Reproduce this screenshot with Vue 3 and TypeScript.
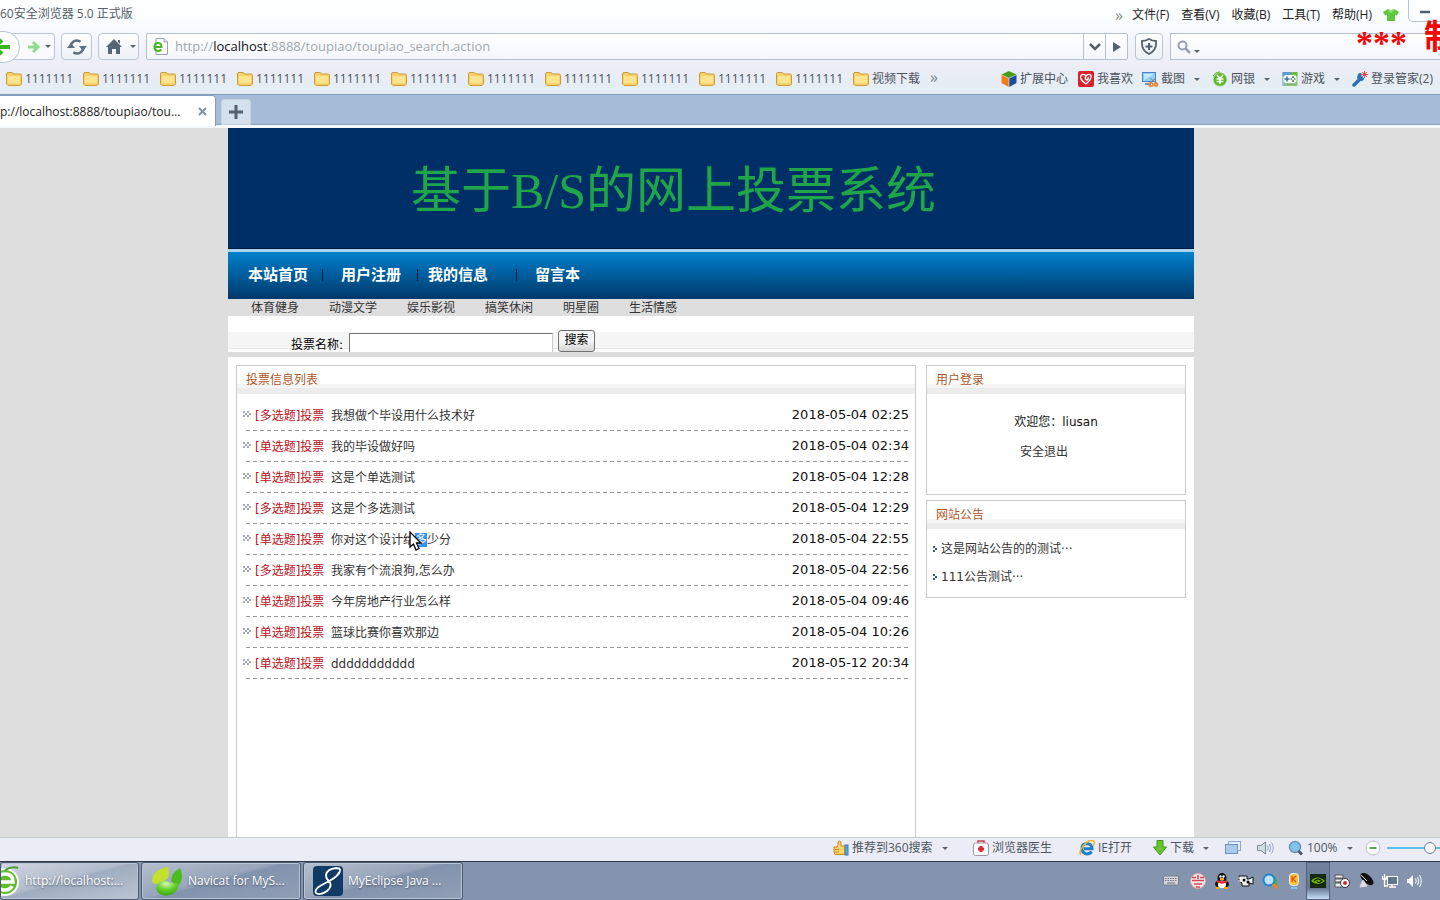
<script setup lang="ts">
import { ref } from 'vue'

interface Poll {
  kind: string
  parts: [string, string, string]
  time: string
}

const menus: string[] = ['文件(F)', '查看(V)', '收藏(B)', '工具(T)', '帮助(H)']
const bookmarks: string[] = [...Array<string>(11).fill('1111111'), '视频下载']
const siteNav: string[] = ['本站首页', '用户注册', '我的信息', '留言本']
const categories: string[] = ['体育健身', '动漫文学', '娱乐影视', '搞笑休闲', '明星圈', '生活情感']
const notices: string[] = ['这是网站公告的的测试···', '111公告测试···']
const polls: Poll[] = [
  { kind: '多选题', parts: ['我想做个毕设用什么技术好', '', ''], time: '2018-05-04 02:25' },
  { kind: '单选题', parts: ['我的毕设做好吗', '', ''], time: '2018-05-04 02:34' },
  { kind: '单选题', parts: ['这是个单选测试', '', ''], time: '2018-05-04 12:28' },
  { kind: '多选题', parts: ['这是个多选测试', '', ''], time: '2018-05-04 12:29' },
  { kind: '单选题', parts: ['你对这个设计给', '多', '少分'], time: '2018-05-04 22:55' },
  { kind: '多选题', parts: ['我家有个流浪狗,怎么办', '', ''], time: '2018-05-04 22:56' },
  { kind: '单选题', parts: ['今年房地产行业怎么样', '', ''], time: '2018-05-04 09:46' },
  { kind: '单选题', parts: ['篮球比赛你喜欢那边', '', ''], time: '2018-05-04 10:26' },
  { kind: '单选题', parts: ['ddddddddddd', '', ''], time: '2018-05-12 20:34' },
]
const keyword = ref('')
const webSearch = ref('')
const zoom = ref(50)
</script>

<template>
  <div class="desktop">
    <header class="chrome">
      <div class="titlebar">
        <span class="app-title">60安全浏览器 5.0 正式版</span>
        <nav class="menus">
          <span class="chev">»</span>
          <button v-for="m in menus" :key="m" type="button">{{ m }}</button>
          <svg class="shirt" width="16" height="14" viewBox="0 0 16 14"><path d="M5 1Q8 3 11 1L16 4L14 7.500L12 6.500V13H4V6.500L2 7.500L0 4Z" fill="#5cc83c" /><path d="M5 1Q8 3 11 1L10 4Q8 5 6 4Z" fill="#8ee070" /></svg>
          <button class="minimize" type="button" aria-label="最小化"><svg width="12" height="6" viewBox="0 0 12 6"><path d="M1 4H11" stroke="#53606c" stroke-width="2.500" /></svg></button>
        </nav>
      </div>
      <div class="marquee"><span class="stars">***</span><span>制</span></div>

      <div class="toolbar">
        <div class="history">
          <button class="back" type="button" aria-label="后退"><svg width="20" height="18" viewBox="0 0 20 18"><path d="M19 9H5M11 2L4 9L11 16" fill="none" stroke="#3db51f" stroke-width="4" /></svg></button>
          <button class="forward" type="button" aria-label="前进">
            <svg width="14" height="14" viewBox="0 0 14 14"><path d="M1 7H10M6 2L11 7L6 12" fill="none" stroke="#8fdc8b" stroke-width="3" /></svg>
            <i class="caret"></i>
          </button>
        </div>
        <button class="tool refresh" type="button" aria-label="刷新"><svg width="20" height="18" viewBox="0 0 20 18"><path d="M4 10A6 6 0 0 1 13.500 3.800M16 8A6 6 0 0 1 6.500 14.200" fill="none" stroke="#5f6f80" stroke-width="2.500" /><path d="M0 10H8L4 5ZM12 8H20L16 13Z" fill="#5f6f80" /></svg></button>
        <button class="tool home" type="button" aria-label="主页"><svg width="16" height="15" viewBox="0 0 16 15"><path d="M8 0L16 8H14V15H10V10H6V15H2V8H0Z" fill="#566676" /><path d="M12 1H14V5L12 3Z" fill="#566676" /></svg><i class="caret"></i></button>
        <div class="address">
          <svg width="16" height="17" viewBox="0 0 16 17"><path d="M3 .5H11L14.500 4V16.500H3Z" fill="#fff" stroke="#94a4b5" /><path d="M11 .5V4H14.500" fill="none" stroke="#94a4b5" /><path d="M1.500 9H8.500Q8.500 5 5 5T1.500 9Q1.500 13 5 13Q7 13 8.300 11.500" fill="none" stroke="#49b524" stroke-width="2" /></svg>
          <div class="url">http://<b>localhost</b>:8888/toupiao/toupiao_search.action</div>
          <button type="button" aria-label="历史"><svg width="12" height="8" viewBox="0 0 12 8"><path d="M1 1L6 6L11 1" fill="none" stroke="#566069" stroke-width="2.500" /></svg></button>
          <button type="button" aria-label="转到"><svg width="10" height="10" viewBox="0 0 10 10"><path d="M1 0L9 5L1 10Z" fill="#566273" /></svg></button>
        </div>
        <button class="tool shield" type="button" aria-label="安全"><svg width="18" height="18" viewBox="0 0 18 18"><path d="M9 1Q12 3 16 3Q17 12 9 16Q1 12 2 3Q6 3 9 1Z" fill="none" stroke="#56626e" stroke-width="1.800" /><path d="M9 5V12M5.500 8.500H12.500" stroke="#56626e" stroke-width="2" /></svg></button>
        <label class="websearch">
          <svg width="14" height="14" viewBox="0 0 14 14"><circle cx="5.500" cy="5.500" r="4" fill="none" stroke="#96a0ae" stroke-width="2" /><path d="M8.500 8.500L13 13" stroke="#96a0ae" stroke-width="2.500" /></svg>
          <i class="caret"></i>
          <input v-model="webSearch" type="text" aria-label="网页搜索" />
        </label>
      </div>

      <div class="bookmarks">
        <ul class="folders">
          <li v-for="(b, i) in bookmarks" :key="i">
            <a href="#"><svg width="16" height="14" viewBox="0 0 16 14"><path d="M.5 2Q.5 .5 2 .5H6L8 2H14Q15.500 2 15.500 3.500V12L14 13.500H2L.5 12Z" fill="#f7d26b" stroke="#cf9a3c" /><path d="M2 4H14V11H2Z" fill="#fde48f" /></svg>{{ b }}</a>
          </li>
          <li class="more">»</li>
        </ul>
        <div class="plugins">
          <button type="button"><svg width="16" height="16" viewBox="0 0 16 16"><path d="M8 0L15.500 3.500L8 7L.5 3.500Z" fill="#4b9e1c" /><path d="M.5 4L7.700 7.500V16L.5 12Z" fill="#ef7d1a" /><path d="M15.500 4L8.300 7.500V16L15.500 12Z" fill="#1e4c9a" /></svg>扩展中心</button>
          <button type="button"><svg width="16" height="16" viewBox="0 0 16 16"><rect width="16" height="16" rx="2" fill="#d8222c" /><path d="M8 13Q1 8 3 4.500Q5.500 2 8 5Q10.500 2 13 4.500Q14 8 8 13M8 5Q6 8 9 9Q11 8 10 6" fill="none" stroke="#fff" stroke-width="1.400" /></svg>我喜欢</button>
          <button type="button"><svg width="16" height="16" viewBox="0 0 16 16"><rect x=".5" y="1.500" width="13" height="9" fill="#8fd0fa" stroke="#4a86c4" /><path d="M2 3H12L2 9Z" fill="#c5eafe" /><path d="M3 13H9" stroke="#7a96b2" stroke-width="2" /><path d="M8 7L14 12M14 7L8 12" stroke="#748596" /><circle cx="9" cy="13.500" r="1.800" fill="none" stroke="#ee7b20" stroke-width="1.400" /><circle cx="14" cy="13.500" r="1.500" fill="none" stroke="#ee7b20" stroke-width="1.400" /></svg>截图<i class="caret"></i></button>
          <button type="button"><svg width="16" height="16" viewBox="0 0 16 16"><circle cx="8" cy="8.500" r="6.800" fill="#58b628" stroke="#b9dfa2" /><path d="M1 5Q3 1 8 .8" fill="none" stroke="#58b628" /><path d="M5 4L8 7.500L11 4M4.500 8H11.500M4.500 10.500H11.500M8 7V13" fill="none" stroke="#fff" stroke-width="1.500" /></svg>网银<i class="caret"></i></button>
          <button type="button"><svg width="16" height="16" viewBox="0 0 16 16"><rect x=".5" y="1" width="15" height="14" rx="1" fill="#8cc07a" /><path d="M.5 1H9V5H.5Z" fill="#5b9bd6" /><path d="M.5 5H3V15H.5Z" fill="#8ab9e0" /><path d="M9 1H15.500V5H9Z" fill="#72b944" /><rect x="1.500" y="4" width="13" height="8" rx="3" fill="#fff" /><path d="M2.500 8H7.500M5 5.500V10.500" stroke="#2f6fae" stroke-width="1.500" /><path d="M11 5V7M11 9V11M8.500 8H10.200M11.800 8H13.500" stroke="#3f7f5a" stroke-width="1.600" /></svg>游戏<i class="caret"></i></button>
          <button type="button"><svg width="16" height="16" viewBox="0 0 16 16"><path d="M2 14L9 7" stroke="#2c70b8" stroke-width="3.500" stroke-linecap="round" /><path d="M6 3Q8 1 10 3L9 6L12 7Q12 10 9 10Q6 9 5 7Z" fill="#2c70b8" /><path d="M12.500 0V7M9 3.500H16M10 1L15 6M15 1L10 6" stroke="#e24c43" /></svg>登录管家(2)</button>
        </div>
      </div>

      <div class="tabs">
        <div class="tab"><span>p://localhost:8888/toupiao/tou...</span><button type="button" aria-label="关闭"><svg width="9" height="9" viewBox="0 0 9 9"><path d="M1 1L8 8M8 1L1 8" stroke="#7e93a5" stroke-width="2" /></svg></button></div>
        <button class="newtab" type="button" aria-label="新标签"><svg width="14" height="14" viewBox="0 0 14 14"><path d="M7 0V14M0 7H14" stroke="#53616f" stroke-width="3" /></svg></button>
      </div>
    </header>

    <main class="viewport">
      <div class="site">
        <h1 class="banner">基于B/S的网上投票系统</h1>
        <ul class="sitenav">
          <li v-for="n in siteNav" :key="n"><a href="#">{{ n }}</a></li>
        </ul>
        <nav class="categories"><a v-for="c in categories" :key="c" href="#">{{ c }}</a></nav>
        <form class="search" @submit.prevent>
          <label for="keyword">投票名称:</label>
          <input id="keyword" v-model="keyword" type="text" />
          <button type="submit">搜索</button>
        </form>
        <div class="content">
          <section class="panel list">
            <h2>投票信息列表</h2>
            <ul>
              <li v-for="p in polls" :key="p.time">
                <svg width="8" height="6" viewBox="0 0 8 6"><path d="M0 0H2V2H0ZM2 2H4V4H2ZM0 4H2V6H0ZM4 0H6V2H4ZM6 2H8V4H6ZM4 4H6V6H4Z" fill="#a6a6b8" /></svg>
                <a class="kind" href="#">[{{ p.kind }}]投票</a>
                <a class="subject" href="#">{{ p.parts[0] }}<span v-if="p.parts[1]" class="selected">{{ p.parts[1] }}<svg class="pointer" width="14" height="20" viewBox="0 0 14 20"><path d="M1 1V16L4.500 13L7 19L10 17.500L7.500 12H12Z" fill="#fff" stroke="#000" stroke-width="1.300" /></svg></span>{{ p.parts[2] }}</a>
                <time>{{ p.time }}</time>
              </li>
            </ul>
          </section>
          <aside>
            <section class="panel login">
              <h2>用户登录</h2>
              <p>欢迎您：liusan</p>
              <p><a href="#">安全退出</a></p>
            </section>
            <section class="panel notices">
              <h2>网站公告</h2>
              <ul>
                <li v-for="n in notices" :key="n"><svg width="5" height="6" viewBox="0 0 5 6"><path d="M0 0H2V2H4V4H2V6H0V4H2V2H0Z" fill="#3c5a8c" /></svg><a href="#">{{ n }}</a></li>
              </ul>
            </section>
          </aside>
        </div>
      </div>
    </main>

    <div class="statusbar">
      <button type="button"><svg width="16" height="16" viewBox="0 0 16 16"><path d="M1 7H4L5 5V2Q6.500 0 8 2V6H12V14.500H2Q1 14.500 1 7Z" fill="#fbd468" stroke="#c98427" /><path d="M2 9.500H6M2 12H6" stroke="#c98427" /><rect x="12" y="5" width="3" height="10" fill="#5aa8dc" stroke="#3b7bb4" /></svg>推荐到360搜索<i class="caret"></i></button>
      <button type="button"><svg width="16" height="16" viewBox="0 0 16 16"><path d="M5 3V1H11V3" fill="none" stroke="#c94048" stroke-width="1.500" /><rect x=".5" y="3" width="15" height="12.500" rx="2" fill="#fff" stroke="#98979e" /><path d="M8 6V12M5 9H11" stroke="#d82830" stroke-width="3" /></svg>浏览器医生</button>
      <button type="button"><svg width="16" height="16" viewBox="0 0 16 16"><path d="M12.500 11.500Q11 14 8 14Q3 13.500 3 8.500T8 3.500Q13 4 13 8.700H5" fill="none" stroke="#1f7fc8" stroke-width="3" /><path d="M2 15Q-1 12 5 5T15 1.500Q16 3 14 6" fill="none" stroke="#f0b52e" stroke-width="1.600" /></svg>IE打开</button>
      <button type="button"><svg width="14" height="16" viewBox="0 0 14 16"><path d="M4 .5H10V7H13.500L7 15L.5 7H4Z" fill="#66c42d" stroke="#3f9a1c" /></svg>下载<i class="caret"></i></button>
      <button type="button" aria-label="窗口"><svg width="16" height="14" viewBox="0 0 16 14"><rect x="3.500" y=".5" width="12" height="9" fill="#e2edfa" stroke="#8ba8ce" /><rect x=".5" y="3.500" width="12" height="9" fill="#a9c9f0" stroke="#6f92c0" /></svg></button>
      <button type="button" aria-label="静音"><svg width="17" height="14" viewBox="0 0 17 14"><path d="M.5 4.500H4L8.500 1V13L4 9.500H.5Z" fill="#d5dbe3" stroke="#7d8995" /><path d="M10.500 4.500Q12 7 10.500 9.500M12.500 3Q15 7 12.500 11M14.500 1.500Q18 7 14.500 12.500" fill="none" stroke="#91a9c4" /></svg></button>
      <button type="button"><svg width="16" height="16" viewBox="0 0 16 16"><circle cx="7" cy="7" r="5.500" fill="#80c4ef" stroke="#7393b4" stroke-width="1.500" /><path d="M10.500 11L14 14.500" stroke="#4c5865" stroke-width="3" /></svg>100%<i class="caret"></i></button>
      <button type="button" aria-label="缩小"><svg width="16" height="16" viewBox="0 0 16 16"><circle cx="8" cy="8" r="7" fill="#fff" stroke="#b4c1cd" /><path d="M4.500 8H11.500" stroke="#55a855" stroke-width="2" /></svg></button>
      <span class="slider"><input v-model="zoom" type="range" min="0" max="100" aria-label="缩放" /></span>
    </div>

    <footer class="taskbar">
      <button class="task active" type="button"><svg width="30" height="30" viewBox="0 0 30 30"><circle cx="15" cy="16" r="13" fill="#62bd2c" stroke="#fff" stroke-width="2" /><path d="M7 16H23Q23 8 15 8T7 16Q7 24 15 24Q20 24 22 20" fill="none" stroke="#fff" stroke-width="3.500" /><path d="M15 4Q22 0 28 2" fill="none" stroke="#4d9c35" stroke-width="2" /></svg>http://localhost:...</button>
      <button class="task" type="button">
        <svg width="32" height="30" viewBox="0 0 32 30">
          <defs>
            <radialGradient id="leaf" cx=".45" cy=".2" r=".8"><stop offset="0" stop-color="#d6f8b4" /><stop offset=".5" stop-color="#66d128" /><stop offset="1" stop-color="#35a80e" /></radialGradient>
          </defs>
          <path d="M1 15Q2 3 17 1Q19 6 17 12Q10 18 3 18Z" fill="#c2e02c" />
          <path d="M20 15Q20 7 29 2Q34 12 27 20Z" fill="#48bd1c" />
          <path d="M5 23Q6 14 15 15Q20 18 28 17Q27 29 15 29.500Q7 29 5 23Z" fill="url(#leaf)" />
        </svg>Navicat for MyS...</button>
      <button class="task" type="button"><svg width="30" height="30" viewBox="0 0 30 30"><rect width="30" height="30" rx="4" fill="#123a66" /><path d="M25 9Q30 2 23 2Q14 3 13 9Q13 13 16 15Q20 20 14 25Q7 30 3 27Q1 24 7 20L18 14Q25 10 26 6" fill="none" stroke="#fff" stroke-width="1.800" /></svg>MyEclipse Java ...</button>
      <div class="tray">
        <svg viewBox="0 0 16 16"><rect x=".5" y="3" width="15" height="9" rx="1" fill="#d5d9dd" stroke="#737c88" /><path d="M2 5.500H14M2 7.500H14" stroke="#68717b" stroke-dasharray="1.500 1" /><path d="M4 10H12" stroke="#68717b" /></svg>
        <svg viewBox="0 0 16 16"><circle cx="8" cy="8" r="7.500" fill="#f6e9e9" stroke="#e3a0a2" /><path d="M2 4.500H6M8 2V6M10 4.500H14M2 7.500H14M4 11H12M6 14H10" stroke="#d34b50" stroke-width="1.600" /></svg>
        <svg viewBox="0 0 16 16"><ellipse cx="8" cy="5" rx="4.500" ry="5" fill="#111" /><ellipse cx="8" cy="11" rx="7" ry="4.500" fill="#111" /><ellipse cx="8" cy="11.500" rx="4" ry="4" fill="#fff" /><path d="M3 8Q8 11 13 8" stroke="#e62c2c" stroke-width="2.500" fill="none" /><circle cx="6.500" cy="3.500" r="1.200" fill="#fff" /><circle cx="9.500" cy="3.500" r="1.200" fill="#fff" /><path d="M6 6H10M2 15H6M10 15H14" stroke="#f4a91d" stroke-width="2" /></svg>
        <svg viewBox="0 0 16 16"><path d="M1 3H9V6H11L15 4V11L11 10V13H4V10L1 8Z" fill="#eee" stroke="#111" /><path d="M0 5H3M0 8H4" stroke="#fff" /><circle cx="6" cy="7" r="1.500" /><circle cx="10" cy="9" r="1.500" /></svg>
        <svg viewBox="0 0 16 16"><path d="M9 1Q16 3 15 13L10 11Z" fill="#48ae45" /><circle cx="7" cy="7" r="5.500" fill="#bce5ff" stroke="#2284d3" stroke-width="2" /><path d="M11 11L15 15" stroke="#ef8821" stroke-width="3" /></svg>
        <svg viewBox="0 0 16 16"><rect x="3.500" y=".5" width="9" height="12" rx="3" fill="#f8c431" stroke="#e7eefa" /><path d="M6 3V9M10 3L7 6L10 9" fill="none" stroke="#d85b19" stroke-width="1.500" /><path d="M5 15H11" stroke="#7fc5f4" stroke-width="2" /></svg>
        <span class="lit"><svg viewBox="0 0 16 16"><rect y="1" width="16" height="14" fill="#17290d" /><path d="M1 8Q7 1 15 8Q8 14 1 8Z" fill="#76b900" /><path d="M4 8Q8 4 12 8Q8 11 7 8" fill="none" stroke="#17290d" stroke-width="1.200" /></svg></span>
        <svg viewBox="0 0 16 16"><path d="M1 2H9V5H1ZM1 6H9V9H1ZM1 10H9V14H1Z" fill="#eee" stroke="#555" /><circle cx="11" cy="10" r="4.500" fill="#fff" stroke="#333" /><circle cx="11" cy="10" r="2" fill="#d42929" /></svg>
        <svg viewBox="0 0 16 16"><ellipse cx="9" cy="6" rx="8" ry="4" transform="rotate(42 9 6)" fill="#111" /><path d="M2 14L5 7L9 13ZM3 2L9 8" fill="#ddd" stroke="#ddd" /></svg>
        <svg viewBox="0 0 16 16"><rect x="5.500" y="3.500" width="10" height="8" fill="#61758c" stroke="#fff" /><path d="M2.500 1V6M.5 3V6H4.500V3M2.500 6V13H6M7 14H14M10 11V14" fill="none" stroke="#fff" stroke-width="1.300" /></svg>
        <svg viewBox="0 0 16 16"><path d="M1 6H3L7 2V14L3 10H1Z" fill="#fff" /><path d="M9.500 5.500Q11 8 9.500 10.500M11.500 4Q14 8 11.500 12M13.500 2Q17 8 13.500 14" fill="none" stroke="#fff" /></svg>
      </div>
    </footer>
  </div>
</template>

<style>
body { margin: 0; }
</style>

<style scoped>
* { box-sizing: border-box; }
.desktop { height: 100vh; display: flex; flex-direction: column; overflow: hidden; background: #dedede; color: #333; font: 12px/16px "Open Sans", "Noto Sans CJK SC", sans-serif; }
button { border: 0; padding: 0; background: none; font: inherit; color: inherit; display: flex; align-items: center; white-space: nowrap; }
a { color: inherit; text-decoration: none; }
ul { list-style: none; margin: 0; padding: 0; }
svg { flex: none; display: block; }
input { font: inherit; }
.caret { flex: none; width: 0; height: 0; border: 3px solid transparent; border-top-color: #59636d; border-bottom: 0; }

.chrome { position: relative; flex: none; overflow: hidden; background: linear-gradient(#fff 0, #fafdff 20px, #f2f3fb 45px, #ecedf5 66px, #e4edf5 92px); }
.titlebar { height: 30px; display: flex; justify-content: space-between; }
.app-title { line-height: 28px; color: #555d66; white-space: nowrap; }
.menus { display: flex; align-items: center; gap: 12px; color: #222; }
.chev { color: #888; font-size: 16px; margin-right: -3px; }
.shirt { margin-left: -1px; }
.minimize { align-self: flex-start; width: 32px; height: 22px; margin-left: -3px; border: 1px solid #b9c3d0; border-width: 0 0 1px 1px; border-radius: 0 0 0 5px; justify-content: center; }
.marquee { position: absolute; z-index: 2; left: calc(100% - 84px); top: 20px; display: flex; gap: 17px; white-space: nowrap; color: #f00808; font: bold 34px/36px "Liberation Serif", "Noto Sans CJK SC", serif; }
.stars { padding-top: 5px; }

.toolbar { height: 32px; display: flex; align-items: center; padding-top: 1px; }
.history { display: flex; align-items: center; width: 55px; height: 27px; margin-right: 6px; border: 1px solid #b9c6d4; border-left: 0; border-radius: 0 4px 4px 0; background: #f8fafd; }
.back { width: 40px; height: 32px; margin-left: -20px; border: 1px solid #b9c6d4; border-radius: 0 16px 16px 0; background: #fff; justify-content: flex-end; padding-right: 8px; }
.forward { gap: 4px; margin-left: 7px; }
.tool { height: 27px; border: 1px solid #b9c6d4; border-radius: 4px; background: linear-gradient(#fdfeff, #edf1f6); justify-content: center; flex: none; }
.refresh { width: 31px; margin-right: 6px; }
.home { width: 41px; gap: 8px; margin-right: 7px; padding-left: 4px; }
.address { flex: 1; min-width: 0; height: 27px; display: flex; align-items: center; border: 1px solid #b4c1ce; border-radius: 2px; background: linear-gradient(#fff, #f4f6fd); padding-left: 6px; margin-right: 7px; }
.url { flex: 1; min-width: 0; overflow: hidden; margin-left: 6px; padding-bottom: 2px; font-size: 13px; line-height: 20px; color: #a3a7ac; }
.url b { color: #111; font-weight: 400; }
.address button { width: 22px; height: 100%; border-left: 1px solid #b4c1ce; justify-content: center; }
.shield { width: 28px; margin-right: 7px; }
.websearch { width: 270px; height: 27px; display: flex; align-items: center; border: 1px solid #b4c1ce; border-right: 0; background: linear-gradient(#fff, #f4f6fd); padding-left: 6px; gap: 3px; }
.websearch .caret { margin-top: 10px; }
.websearch input { flex: 1; min-width: 0; border: 0; background: none; outline: 0; }

.bookmarks { height: 32px; padding-top: 2px; display: flex; justify-content: space-between; align-items: center; color: #4b535c; }
.folders { display: flex; padding-left: 6px; }
.folders li { width: 77px; }
.folders a { display: flex; align-items: center; gap: 3px; white-space: nowrap; }
.folders .more { width: 12px; font-size: 16px; line-height: 12px; color: #7b838c; }
.plugins { display: grid; grid-template-columns: 77px 64px 70px 70px 70px 88px; }
.plugins button { gap: 3px; }
.plugins .caret, .statusbar .caret { margin-left: 6px; }

.tabs { height: 34px; display: flex; align-items: flex-end; padding-bottom: 3px; border-top: 1px solid #7f9cba; background: linear-gradient(#a5bbd7 0, #a5bbd7 29px, #87a1be 29px, #87a1be 30px, #f4f8fb 30px); }
.tab { width: 216px; height: 31px; margin-bottom: -1px; display: flex; align-items: center; justify-content: space-between; padding-right: 8px; border: 1px solid #86a0bc; border-width: 1px 1px 0 0; border-radius: 0 4px 0 0; background: #fff; color: #222; white-space: nowrap; }
.tab span { padding-top: 2px; }
.newtab { width: 30px; height: 26px; margin-left: 5px; justify-content: center; border: 1px solid #c4d2e2; border-radius: 3px 3px 0 0; background: #d5e0ed; }

.viewport { flex: 1; min-height: 0; overflow: hidden; padding-right: 18px; display: flex; justify-content: center; font-family: "DejaVu Sans", "Noto Sans CJK SC", sans-serif; }
.site { width: 966px; display: flex; flex-direction: column; }
.banner { flex: none; height: 121px; margin: 0; padding-left: 183px; background: #002e67; border-bottom: 1px solid #001a3e; color: #1ea648; font: 400 50px/126px "Liberation Serif", "Noto Sans CJK SC", serif; }
.sitenav { flex: none; height: 50px; display: grid; grid-template-columns: 95px 95px 99px auto; padding-bottom: 2px; border-top: 3px solid #a8d4f2; background: linear-gradient(#0080cc, #00386a); color: #fff; font-weight: 700; font-size: 15px; }
.sitenav li { display: flex; align-items: center; padding-left: 18px; }
.sitenav li:first-child { padding-left: 20px; }
.sitenav li:nth-child(3) { padding-left: 10px; }
.sitenav li:not(:last-child)::after { content: ""; width: 1px; height: 12px; margin-left: auto; background: #001c3d; }
.categories { flex: none; height: 17px; display: flex; gap: 30px; padding-left: 23px; line-height: 18px; }
.search { flex: none; height: 36px; display: flex; align-items: flex-start; overflow: hidden; padding: 14px 0 0 63px; background: linear-gradient(#fff 16px, #f5f5f5 16px, #f5f5f5 32px, #e8e8e8 32px, #e8e8e8 33px, #fff 33px); color: #000; }
.search label { margin-top: 7px; width: 58px; white-space: nowrap; }
.search input { width: 204px; height: 24px; margin-top: 3px; border: 1px solid #777; border-right-color: #ccc; background: #fff; }
.search button { width: 37px; height: 22px; margin-left: 5px; justify-content: center; border: 1px solid #707070; border-radius: 3px; background: linear-gradient(#f5f5f5 50%, #d5d5d5); padding-bottom: 3px; }
.content { flex: 1; min-height: 0; display: flex; align-items: flex-start; gap: 10px; border-top: 5px solid #dcdcdc; background: #fff; padding: 8px 8px 0; }
.panel { border: 1px solid #ccc; background: #fff; }
.panel h2 { margin: 0; height: 28px; padding-left: 9px; color: #b0562a; font-size: 12px; line-height: 28px; font-weight: 400; text-align: left; background: linear-gradient(#fff 18px, #f5f5f5 18px, #f5f5f5 22px, #ececec 22px); }
.list { flex: 1; align-self: stretch; border-bottom: 0; }
.list ul { padding: 6px 6px 0 6px; }
.list li { height: 31px; display: flex; align-items: center; position: relative; }
.list li > svg { margin-bottom: 3px; }
.list li::after { content: ""; position: absolute; left: 3px; right: 0; bottom: 0; height: 1px; background: repeating-linear-gradient(90deg, #999 0 4px, transparent 4px 7px); }
.kind { width: 76px; margin-left: 4px; color: #b8141c; }
.selected { position: relative; background: #3295f5; color: #fff; }
.pointer { position: absolute; left: -6px; top: -2px; }
.list time { margin-left: auto; padding-bottom: 2px; font-size: 13px; color: #111; }
aside { width: 260px; }
.login { height: 130px; margin-bottom: 5px; text-align: center; color: #111; }
.login p { margin: 20px 0 0; font-size: 12px; }
.login p + p { margin: 14px 24px 0 0; color: #333; }
.notices { height: 98px; }
.notices ul { padding: 6px; }
.notices li { display: flex; align-items: center; height: 28px; gap: 3px; }

.statusbar { flex: none; height: 24px; display: grid; grid-template-columns: 140px 106px 74px 72px 32px 31px 77px 22px 53px; justify-content: end; align-items: center; padding-bottom: 3px; border-top: 1px solid #c8ccd2; background: #ebecf5; color: #4d5662; }
.statusbar button { gap: 3px; }
.slider { overflow: hidden; display: block; }
.slider input { display: block; width: 86px; height: 16px; margin: 0; appearance: none; background: linear-gradient(transparent 7px, #5bc0ea 7px, #5bc0ea 9px, transparent 9px); }
.slider input::-webkit-slider-thumb { appearance: none; width: 12px; height: 12px; border: 1px solid #75808c; border-radius: 50%; background: #f5f9fc; }

.taskbar { flex: none; height: 39px; display: flex; gap: 2px; border-top: 1px solid #2c3a50; background: #8494ae; color: #fff; }
.task { width: 160px; gap: 5px; padding-left: 9px; border: 1px solid #4c5a72; border-radius: 3px; box-shadow: inset 0 0 0 1px #b9c3d2; background: linear-gradient(165deg, #b4becd 0, #98a5bb 45%, #8493ad 50%, #909eb6); text-shadow: 0 1px 2px #44526a; overflow: hidden; }
.task.active { width: 139px; padding: 0; background: linear-gradient(165deg, #d0d6e0 0, #b2bccc 45%, #a0adc0 50%, #bac4d2); }
.active svg { margin-left: -11px; }
.tray { margin-left: auto; padding-right: 14px; display: grid; grid-template-columns: 31px repeat(10, 24px); align-items: center; justify-items: center; }
.tray > svg:first-child { justify-self: center; }
.tray svg { width: 16px; height: 16px; }
.lit { align-self: stretch; display: flex; align-items: center; padding: 0 3px; border: 1px solid #52627c; background: linear-gradient(#71839e, #667894 70%, #c6dff5); }
</style>
